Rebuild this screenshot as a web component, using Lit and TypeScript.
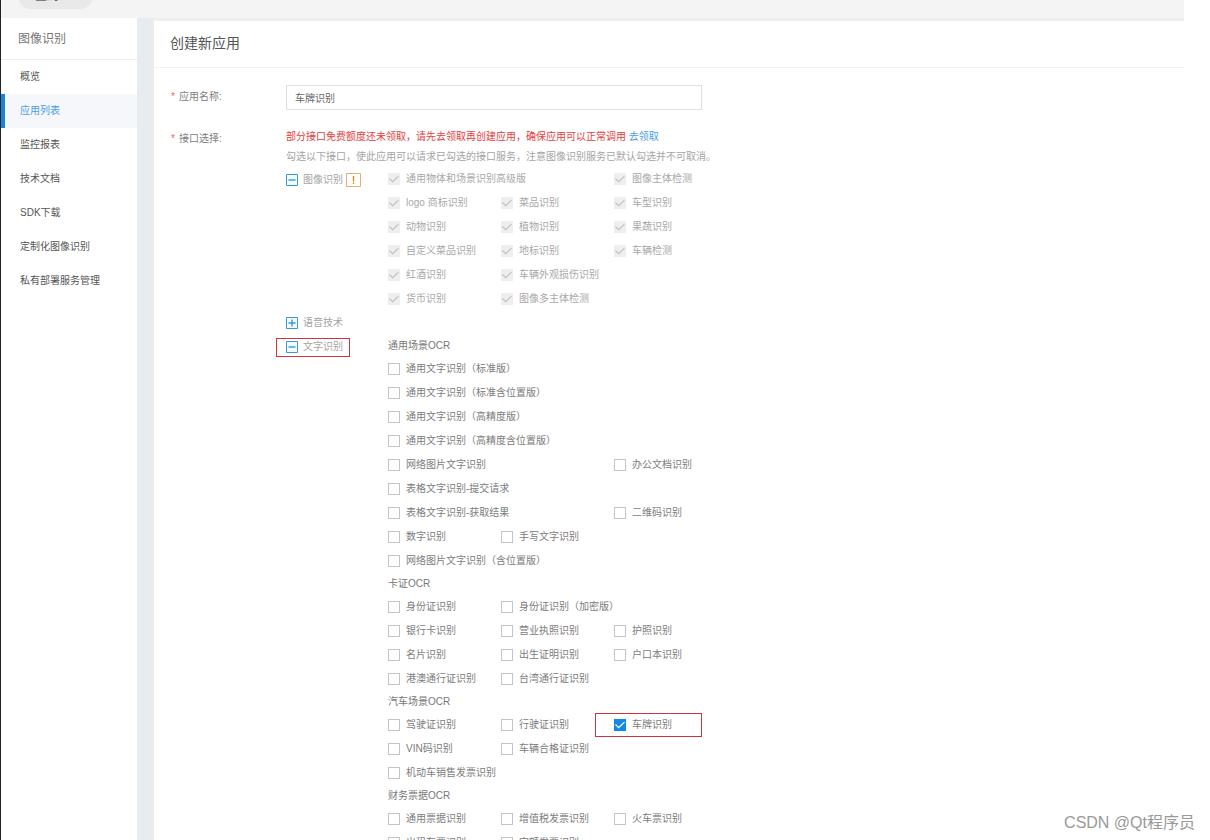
import { LitElement, html, css, nothing } from "lit";
import { customElement } from "lit/decorators.js";
import { classMap } from "lit/directives/class-map.js";

interface Api {
  name: string;
  col?: number;
  wide?: boolean;
  checked?: boolean;
  marked?: boolean;
}

const a = (name: string, col: number, wide = false): Api => ({ name, col, wide });

const NAV = ["概览", "应用列表", "监控报表", "技术文档", "SDK下载", "定制化图像识别", "私有部署服务管理"];

const IMAGE_APIS: Api[] = [
  a("通用物体和场景识别高级版", 1, true), a("图像主体检测", 3),
  a("logo 商标识别", 1), a("菜品识别", 2), a("车型识别", 3),
  a("动物识别", 1), a("植物识别", 2), a("果蔬识别", 3),
  a("自定义菜品识别", 1), a("地标识别", 2), a("车辆检测", 3),
  a("红酒识别", 1), a("车辆外观损伤识别", 2),
  a("货币识别", 1), a("图像多主体检测", 2),
];

const OCR_SECTIONS: { title: string; apis: Api[] }[] = [
  {
    title: "通用场景OCR",
    apis: [
      a("通用文字识别（标准版）", 1, true),
      a("通用文字识别（标准含位置版）", 1, true),
      a("通用文字识别（高精度版）", 1, true),
      a("通用文字识别（高精度含位置版）", 1, true),
      a("网络图片文字识别", 1, true), a("办公文档识别", 3),
      a("表格文字识别-提交请求", 1, true),
      a("表格文字识别-获取结果", 1, true), a("二维码识别", 3),
      a("数字识别", 1), a("手写文字识别", 2),
      a("网络图片文字识别（含位置版）", 1, true),
    ],
  },
  {
    title: "卡证OCR",
    apis: [
      a("身份证识别", 1), a("身份证识别（加密版）", 2),
      a("银行卡识别", 1), a("营业执照识别", 2), a("护照识别", 3),
      a("名片识别", 1), a("出生证明识别", 2), a("户口本识别", 3),
      a("港澳通行证识别", 1), a("台湾通行证识别", 2),
    ],
  },
  {
    title: "汽车场景OCR",
    apis: [
      a("驾驶证识别", 1), a("行驶证识别", 2),
      { name: "车牌识别", col: 3, checked: true, marked: true },
      a("VIN码识别", 1), a("车辆合格证识别", 2),
      a("机动车销售发票识别", 1, true),
    ],
  },
  {
    title: "财务票据OCR",
    apis: [
      a("通用票据识别", 1), a("增值税发票识别", 2), a("火车票识别", 3),
      a("出租车票识别", 1), a("定额发票识别", 2),
    ],
  },
];

@customElement("app-root")
export class AppRoot extends LitElement {
  static styles = css`
    :host {
      display: flex;
      flex-direction: column;
      height: 100vh;
      overflow: hidden;
      box-sizing: border-box;
      border-left: 1px solid #222;
      background: #fff;
      color: #777;
      font: 10px/24px "Liberation Sans", "Noto Sans CJK SC", sans-serif;
    }
    * { box-sizing: border-box; }
    h1, h2, h3, p, ul { margin: 0; padding: 0; font-weight: inherit; }
    .topbar {
      flex: none;
      display: flex;
      align-items: flex-end;
      height: 18px;
      margin-right: 26px;
      padding: 0 17px 9px;
      overflow: hidden;
      background: #f4f4f4;
    }
    .scope {
      flex: none;
      width: 75px;
      height: 26px;
      padding: 0 17px;
      border: 0;
      border-radius: 13px;
      background: #e9e9e9;
      color: #666;
      font: inherit;
      font-size: 12px;
      text-align: left;
    }
    .body { flex: 1; display: flex; min-height: 0; }
    .side { flex: none; width: 136px; }
    .side-title {
      height: 42px;
      padding-left: 17px;
      border-bottom: 1px solid #eee;
      font-size: 12px;
      line-height: 42px;
    }
    .nav { list-style: none; }
    .nav-link {
      display: block;
      padding-left: 19px;
      line-height: 34px;
      color: #555;
      text-decoration: none;
    }
    .nav-link.active {
      padding-left: 15px;
      border-left: 4px solid #1c84d8;
      background: #f5f7fa;
      color: #4a9ce8;
    }
    .main {
      flex: 1;
      min-width: 0;
      border-left: 17px solid #e8ecef;
    }
    .title {
      height: 50px;
      margin-right: 26px;
      padding-left: 16px;
      border-top: 3px solid #eceff0;
      border-bottom: 1px solid #f0f1f2;
      font-size: 14px;
      line-height: 44px;
      color: #555;
    }
    .form {
      display: grid;
      grid-template-columns: 115px 1fr;
      row-gap: 17px;
      padding: 17px 26px 0 17px;
    }
    .label { line-height: 24px; color: #808080; }
    .label::before { content: "*"; margin-right: 4px; color: #e66; }
    .name {
      display: block;
      width: 416px;
      max-width: 100%;
      height: 25px;
      padding: 0 8px;
      border: 1px solid #e0e0e0;
      outline: 0;
      color: #666;
      font: inherit;
    }
    .warning { line-height: 20px; color: #e63c40; }
    .warning a { color: #4a9ce8; text-decoration: none; }
    .hint { line-height: 20px; color: #a4a4a4; }
    .group { display: grid; grid-template-columns: 102px 1fr; }
    .group-head { display: flex; align-items: center; align-self: start; height: 24px; color: #a4a4a4; }
    .group-head.noted { height: 26px; }
    .toggle {
      display: flex;
      align-items: center;
      gap: 5px;
      padding: 0;
      border: 0;
      background: none;
      color: inherit;
      font: inherit;
    }
    .toggle svg, .note { flex: none; display: block; }
    .note { margin-left: 3px; }
    .group-head.marked .toggle {
      height: 19px;
      margin-left: -10px;
      padding: 0 6px 0 9px;
      border: 1px solid #d0333a;
    }
    .section-title { font-size: 10px; line-height: 22px; }
    .apis { display: grid; grid-template-columns: repeat(3, 113px); }
    .api { display: flex; align-items: center; height: 24px; gap: 6px; white-space: nowrap; color: #7c7c7c; }
    .c1 { grid-column: 1; }
    .c2 { grid-column: 2; }
    .c3 { grid-column: 3; }
    .c1.wide { grid-column: 1 / span 2; }
    .api.off { color: #a8a8a8; }
    .api.marked {
      width: 107px;
      margin-left: -19px;
      padding-left: 18px;
      border: 1px solid #d0333a;
    }
    .box {
      flex: none;
      appearance: none;
      width: 12px;
      height: 12px;
      margin: 0;
      border: 1px solid #c4c4c4;
      background: #fff;
    }
    .box:checked {
      border: 0;
      background: #1488e8 url("data:image/svg+xml,%3Csvg xmlns='http://www.w3.org/2000/svg' viewBox='0 0 12 12'%3E%3Cpath d='M1.5 5.5l3.2 3.2 5.8-5.6' fill='none' stroke='%23fff' stroke-width='1.3'/%3E%3C/svg%3E");
    }
    .box:disabled {
      background: #eee url("data:image/svg+xml,%3Csvg xmlns='http://www.w3.org/2000/svg' viewBox='0 0 12 12'%3E%3Cpath d='M1.5 5.5l3.2 3.2 5.8-5.6' fill='none' stroke='%23c0c0c0' stroke-width='1.1'/%3E%3C/svg%3E");
    }
    .watermark {
      position: absolute;
      right: 15px;
      bottom: 5px;
      font-size: 16px;
      color: #999;
    }
  `;

  private toggle(name: string, open: boolean) {
    return html`<button class="toggle" type="button" aria-expanded=${open}>
      <svg width="12" height="12" viewBox="0 0 12 12" fill="#f2faff" stroke="#3a98dc">
        <path d="M.5 .5h11v11h-11z" />
        <path d=${open ? "M2.5 6h7" : "M2.5 6h7M6 2.5v7"} stroke-width="1.4" />
      </svg>
      <span>${name}</span>
    </button>`;
  }

  private apis(list: Api[], disabled = false) {
    return html`<div class="apis">
      ${list.map(
        (x) => html`<label
          class=${classMap({ api: true, [`c${x.col}`]: true, wide: !!x.wide, off: disabled, marked: !!x.marked })}
          ><input class="box" type="checkbox" ?checked=${disabled || !!x.checked} ?disabled=${disabled} /><span
            >${x.name}</span
          ></label
        >`
      )}
    </div>`;
  }

  render() {
    return html`
      <header class="topbar"><button class="scope" type="button">全局</button></header>
      <div class="body">
        <nav class="side">
          <h2 class="side-title">图像识别</h2>
          <ul class="nav">
            ${NAV.map(
              (n, i) => html`<li>
                <a class=${classMap({ "nav-link": true, active: i === 1 })} href="#" aria-current=${i === 1 ? "page" : nothing}>${n}</a>
              </li>`
            )}
          </ul>
        </nav>
        <main class="main">
          <h1 class="title">创建新应用</h1>
          <form class="form">
            <label class="label" for="name">应用名称:</label>
            <input class="name" id="name" type="text" value="车牌识别" />
            <div class="label">接口选择:</div>
            <div>
              <p class="warning">部分接口免费额度还未领取，请先去领取再创建应用，确保应用可以正常调用 <a href="#">去领取</a></p>
              <p class="hint">勾选以下接口，使此应用可以请求已勾选的接口服务，注意图像识别服务已默认勾选并不可取消。</p>
              <div class="group">
                <div class="group-head noted">
                  ${this.toggle("图像识别", true)}
                  <svg class="note" width="15" height="14" viewBox="0 0 15 14" fill="none" stroke="#e6b06a">
                    <path d="M.5 .5h14v13H.5z" />
                    <path d="M7.5 3v5.5M7.5 9.5v1.5" stroke="#e08a1c" stroke-width="1.4" />
                  </svg>
                </div>
                ${this.apis(IMAGE_APIS, true)}
              </div>
              <div class="group">
                <div class="group-head">${this.toggle("语音技术", false)}</div>
              </div>
              <div class="group">
                <div class="group-head marked">${this.toggle("文字识别", true)}</div>
                <div>
                  ${OCR_SECTIONS.map((s) => html`<h3 class="section-title">${s.title}</h3>${this.apis(s.apis)}`)}
                </div>
              </div>
            </div>
          </form>
        </main>
      </div>
      <div class="watermark">CSDN @Qt程序员</div>
    `;
  }
}
